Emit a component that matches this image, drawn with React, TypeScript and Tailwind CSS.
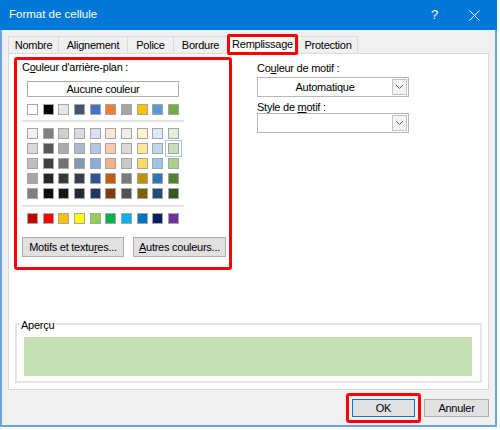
import React from 'react';

const font = { fontFamily: '"Liberation Sans", Arial, sans-serif' };

const themeRow = ['#ffffff', '#000000', '#e7e6e6', '#44546a', '#4472c4', '#ed7d31', '#a5a5a5', '#ffc000', '#5b9bd5', '#70ad47'];

const shadeRows = [
  ['#f2f2f2', '#7f7f7f', '#d0cece', '#d6dce4', '#d9e2f3', '#fbe5d6', '#ededed', '#fff2cc', '#deebf7', '#e2f0d9'],
  ['#d9d9d9', '#595959', '#aeaaaa', '#adb9ca', '#b4c7e7', '#f8cbad', '#dbdbdb', '#ffe699', '#bdd7ee', '#c5e0b4'],
  ['#bfbfbf', '#404040', '#767171', '#8497b0', '#8faadc', '#f4b183', '#c9c9c9', '#ffd966', '#9dc3e6', '#a9d18e'],
  ['#a6a6a6', '#262626', '#3b3838', '#333f50', '#2f5597', '#c55a11', '#7b7b7b', '#bf9000', '#2e75b6', '#548235'],
  ['#808080', '#0d0d0d', '#181717', '#222a35', '#1f3864', '#843c0c', '#525252', '#7f6000', '#1f4e79', '#385723'],
];

const standardRow = ['#c00000', '#ff0000', '#ffc000', '#ffff00', '#92d050', '#00b050', '#00b0f0', '#0070c0', '#002060', '#7030a0'];

const tabs = [
  { label: 'Nombre', w: 'w-[50px]' },
  { label: 'Alignement', w: 'w-[69px]' },
  { label: 'Police', w: 'w-[46px]' },
  { label: 'Bordure', w: 'w-[54px]' },
  { label: 'Remplissage', w: 'w-[71px]', active: true },
  { label: 'Protection', w: 'w-[60px]' },
];

function Swatch({ color, selected }: { color: string; selected?: boolean }) {
  return (
    <div
      className={
        selected
          ? 'w-[11px] h-[11px] border border-[#a6a6a6] outline outline-1 outline-offset-[2px] outline-[#99c9ef]'
          : 'w-[11px] h-[11px] border border-[#a6a6a6]'
      }
      style={{ backgroundColor: color }}
    />
  );
}

function SwatchRow({ colors, selectedIndex }: { colors: string[]; selectedIndex?: number }) {
  return (
    <div className="flex justify-between w-[152px] ml-[10px]">
      {colors.map((c, i) => (
        <Swatch key={i} color={c} selected={i === selectedIndex} />
      ))}
    </div>
  );
}

function Chevron() {
  return (
    <svg width="9" height="6" viewBox="0 0 9 6" fill="none">
      <polyline points="1,1 4.5,4.5 8,1" stroke="#606060" strokeWidth="1" />
    </svg>
  );
}

function Dropdown({ value }: { value?: string }) {
  return (
    <div className="flex items-center w-[152px] h-[20px] border border-[#b5b5b5] bg-white">
      <div className="flex-1 text-center leading-[18px] text-black">{value}</div>
      <div className="flex items-center justify-center w-[15px] h-[16px] mr-[1px] border border-[#c4c4c4] bg-[#f4f4f4]">
        <Chevron />
      </div>
    </div>
  );
}

export default function App() {
  return (
    <div className="w-[500px] h-[430px] bg-white text-black text-[11px] tracking-[-0.25px]" style={font}>
      <div className="flex flex-col w-[497px] h-[427px]">
        {/* title bar */}
        <div className="flex items-center h-[30px] bg-[#0078d7] text-white">
          <span className="ml-[9px] text-[11.5px] tracking-normal">Format de cellule</span>
          <span className="ml-auto text-[13px] mr-[31px]">?</span>
          <svg width="11" height="11" viewBox="0 0 11 11" className="mr-[17px]">
            <line x1="0.5" y1="0.5" x2="10.5" y2="10.5" stroke="white" strokeWidth="1" />
            <line x1="10.5" y1="0.5" x2="0.5" y2="10.5" stroke="white" strokeWidth="1" />
          </svg>
        </div>

        {/* body */}
        <div className="flex flex-col flex-1 bg-[#f0f0f0] border-x-2 border-b-2 border-[#6aa6e0]">
          {/* tabs */}
          <div className="relative z-10 flex h-[21px] mt-[4px] ml-[6px] -mb-[2px]">
            {tabs.map((t) =>
              t.active ? (
                <div
                  key={t.label}
                  className={`${t.w} h-[21px] flex items-center justify-center bg-white border-[3px] border-[#ff0000] rounded-[2px]`}
                >
                  {t.label}
                </div>
              ) : (
                <div
                  key={t.label}
                  className={`${t.w} h-[17px] mt-[2px] flex items-center justify-center border-l border-t border-[#d9d9d9] last:border-r bg-[#f0f0f0]`}
                >
                  {t.label}
                </div>
              )
            )}
          </div>

          {/* panel */}
          <div className="flex flex-col w-[481px] h-[337px] ml-[6px] bg-white border border-[#d9d9d9]">
            <div className="flex">
              {/* background colour box */}
              <div className="w-[218px] h-[213px] mt-[3px] ml-[5px] border-[3px] border-[#ff0000] rounded-[3px]">
                <div className="ml-[5px] leading-[15px]">
                  C<span className="underline">o</span>uleur d'arrière-plan :
                </div>
                <div className="ml-[10px] mt-[6px] w-[152px] h-[16px] border border-[#adadad] flex items-center justify-center leading-[14px]">
                  Aucune couleur
                </div>
                <div className="mt-[7px]">
                  <SwatchRow colors={themeRow} />
                </div>
                <div className="ml-[5px] mt-[5px] w-[162px] h-[2px] bg-[#e3e3e3]" />
                <div className="flex flex-col gap-[4px] mt-[6px]">
                  {shadeRows.map((row, i) => (
                    <SwatchRow key={i} colors={row} selectedIndex={i === 1 ? 9 : undefined} />
                  ))}
                </div>
                <div className="ml-[5px] mt-[6px] w-[162px] h-[2px] bg-[#e3e3e3]" />
                <div className="mt-[6px]">
                  <SwatchRow colors={standardRow} />
                </div>
                <div className="flex gap-[9px] ml-[5px] mt-[13px]">
                  <div className="w-[102px] h-[20px] flex items-center justify-center bg-[#e1e1e1] border border-[#adadad]">
                    <span>
                      Motifs et textu<span className="underline">r</span>es...
                    </span>
                  </div>
                  <div className="w-[93px] h-[20px] flex items-center justify-center bg-[#e1e1e1] border border-[#adadad]">
                    <span>
                      <span className="underline">A</span>utres couleurs...
                    </span>
                  </div>
                </div>
              </div>

              {/* pattern column */}
              <div className="ml-[25px] mt-[7px]">
                <div className="leading-[15px]">
                  Co<span className="underline">u</span>leur de motif :
                </div>
                <div className="mt-[1px]">
                  <Dropdown value="Automatique" />
                </div>
                <div className="mt-[4px] leading-[13px]">
                  Style de <span className="underline">m</span>otif :
                </div>
                <div className="-mt-[1px]">
                  <Dropdown />
                </div>
              </div>
            </div>

            {/* preview */}
            <div className="relative mt-auto mb-[6px] ml-[6px] w-[467px] h-[60px] border-2 border-[#e6e6e6]">
              <span className="absolute left-[3px] -top-[7px] bg-white px-[1px] leading-[14px]">Aperçu</span>
              <div className="ml-[7px] mt-[12px] w-[448px] h-[39px] bg-[#c6e0b4]" />
            </div>
          </div>

          {/* footer */}
          <div className="flex justify-end items-start gap-[3px] mt-[3px] mr-[6px]">
            <div className="p-[3px] border-[3px] border-[#ff0000] rounded-[3px]">
              <div className="w-[63px] h-[18px] flex items-center justify-center bg-[#e1e1e1] border border-[#0078d7]">OK</div>
            </div>
            <div className="mt-[6px] w-[65px] h-[18px] flex items-center justify-center bg-[#e1e1e1] border border-[#adadad]">
              Annuler
            </div>
          </div>
        </div>
      </div>
    </div>
  );
}
